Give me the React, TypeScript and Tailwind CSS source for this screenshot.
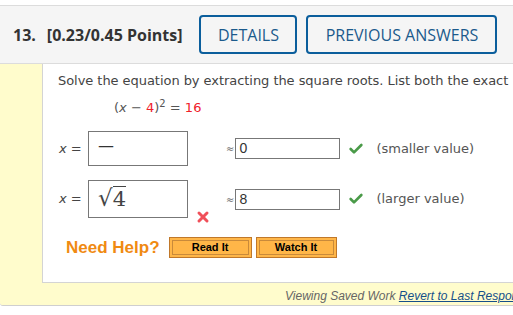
import { Check, X } from 'lucide-react';

function AnswerRow({
  expr,
  approx,
  label,
  wrong,
  tall,
}: {
  expr: React.ReactNode;
  approx: string;
  label: string;
  wrong?: boolean;
  tall?: boolean;
}) {
  return (
    <div className={`flex items-center ${tall ? 'h-[38px]' : 'h-[35px]'}`}>
      <span className="w-[45px] pl-[16px] text-[13px] text-[#444]">
        <i>x</i> =
      </span>
      <div className="w-[100px] h-full border border-[#777] bg-white pl-[9px] pt-[2px] text-[#333]">{expr}</div>
      <div className="w-[38px] h-full relative">
        {wrong && (
          <X className="absolute left-[7px] top-[29px] w-[16px] h-[16px] text-[#f0505a]" strokeWidth={4.5} />
        )}
      </div>
      <span className="text-[10px] text-[#666] mr-[1px]">≈</span>
      <div className="w-[105px] h-[21px] border border-[#777] bg-white pl-[3px] text-[14px] leading-[19px] text-[#333] font-['Liberation_Sans',sans-serif]">
        {approx}
      </div>
      <Check className="ml-[8px] w-[16px] h-[16px] text-[#4a9a48]" strokeWidth={4} />
      <span className="ml-[12px] text-[13px] text-[#555]">{label}</span>
    </div>
  );
}

export default function App() {
  return (
    <div className="w-[513px] h-[315px] overflow-hidden bg-white font-['DejaVu_Sans',sans-serif]">
      <div className="mt-[5px] h-[59px] border-y border-[#dcdcdc] bg-[#f5f5f5] flex items-center pl-[13px] whitespace-nowrap font-['Open_Sans',sans-serif]">
        <span className="text-[16px] font-bold text-[#333]">13.</span>
        <span className="ml-[11px] text-[16px] font-bold text-[#333]">[0.23/0.45 Points]</span>
        <button className="ml-[17px] w-[98px] h-[39px] border-2 border-[#0b5e9c] rounded-[4px] text-[16px] font-medium text-[#1b5a8c]">
          DETAILS
        </button>
        <button className="ml-[9px] w-[191px] h-[39px] border-2 border-[#0b5e9c] rounded-[4px] text-[16px] font-medium text-[#1b5a8c]">
          PREVIOUS ANSWERS
        </button>
      </div>
      <div className="bg-[#fffccc] border-b border-[#cfcfcf] rounded-bl-[3px] w-[520px] h-[242px]">
        <div className="ml-[42px] h-[219px] bg-white border-l border-b border-[#d4d4d4] pl-[15px] pt-[7px] whitespace-nowrap">
          <p className="text-[13px] text-[#444] tracking-[-0.05px]">
            Solve the equation by extracting the square roots. List both the exact
          </p>
          <p className="mt-[7px] ml-[56px] text-[13px] text-[#555]">
            (<i>x</i> − <span className="text-[#f0202a]">4</span>)<sup className="text-[10px]">2</sup> ={' '}
            <span className="text-[#f0202a]">16</span>
          </p>
          <div className="mt-[14px] -ml-[15px] flex flex-col gap-[14px]">
            <AnswerRow
              expr={<span className="text-[16px] leading-[16px]">—</span>}
              approx="0"
              label="(smaller value)"
            />
            <AnswerRow
              expr={
                <span className="font-['DejaVu_Serif',serif] text-[23px] leading-[30px] text-[#444]">
                  √<span className="border-t border-[#444] text-[21px]">4</span>
                </span>
              }
              approx="8"
              label="(larger value)"
              wrong
              tall
            />
          </div>
          <div className="mt-[17px] flex items-center font-['Liberation_Sans',sans-serif]">
            <span className="ml-[8px] text-[17px] font-bold text-[#f08a12]">Need Help?</span>
            <button className="ml-[9px] w-[83px] h-[21px] border border-[#c0782a] bg-[#ffb648] p-[2px]">
              <span className="block h-full border border-[#c98a3a] text-[11px] leading-[13px] font-bold text-black">Read It</span>
            </button>
            <button className="ml-[4px] w-[81px] h-[21px] border border-[#c0782a] bg-[#ffb648] p-[2px]">
              <span className="block h-full border border-[#c98a3a] text-[11px] leading-[13px] font-bold text-black">Watch It</span>
            </button>
          </div>
        </div>
        <p className="pl-[285px] pt-[4px] text-[12px] italic text-[#666] font-['Liberation_Sans',sans-serif] whitespace-nowrap">
          Viewing Saved Work <span className="text-[#15508a] underline">Revert to Last Response</span>
        </p>
      </div>
    </div>
  );
}
